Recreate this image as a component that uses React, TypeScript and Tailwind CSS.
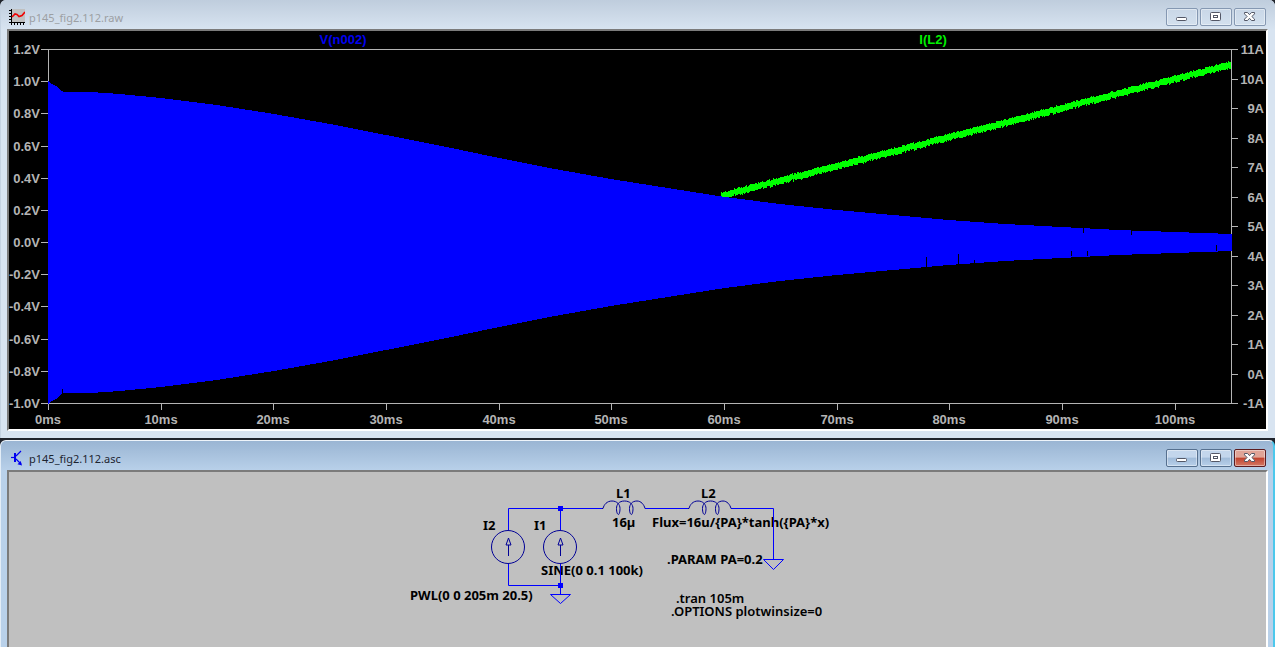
import React from "react";

type Variant = "inactive" | "active";

// upper envelope of V(n002) as x / y points, the lower one is its mirror
const ENVELOPE = [
    [48, 81], [52, 84], [56, 86], [60, 90], [64, 92], [90, 92], [120, 94],
    [161, 98], [217, 105], [274, 114], [330, 124], [386, 135], [442, 146],
    [499, 158], [555, 169], [611, 179], [668, 188], [725, 197], [780, 204],
    [837, 210], [893, 215], [949, 220], [1005, 224], [1062, 227],
    [1118, 230], [1175, 232], [1232, 234],
];
const ZERO = 242;

// sampling gaps along the edges of the trace
const GAPS = [
    [62, 389, 8], [926, 257, 10], [958, 254, 10], [974, 260, 4],
    [1071, 251, 5], [1087, 251, 5], [1216, 245, 6], [1083, 226, 7],
    [1131, 229, 6],
];

const VOLTS = ["1.2V", "1.0V", "0.8V", "0.6V", "0.4V", "0.2V", "0.0V", "-0.2V", "-0.4V", "-0.6V", "-0.8V", "-1.0V"];
const AMPS = ["11A", "10A", "9A", "8A", "7A", "6A", "5A", "4A", "3A", "2A", "1A", "0A", "-1A"];
const TIMES = ["0ms", "10ms", "20ms", "30ms", "40ms", "50ms", "60ms", "70ms", "80ms", "90ms", "100ms"];

const envelopePath = () => {
    const top = ENVELOPE.map(([x, y]) => `${x},${y}`);
    const bottom = [...ENVELOPE].reverse().map(([x, y]) => `${x},${2 * ZERO - y + 1}`);
    return [...top, ...bottom].join(" ");
};

const currentPath = () => {
    let d = "";
    let seed = 7;
    for (let x = 721; x < 1231; x++) {
        seed = (seed * 1103 + 12345) % 65536;
        const mid = 196 - (x - 721) * 0.2575;
        const y = Math.round(mid - 3.5 + (seed / 65536 - 0.5) * 1.6);
        const height = seed % 3 === 0 ? 6 : 7;
        d += `M${x} ${y}h1v${height}h-1z`;
    }
    return d;
};

const WaveIcon = () => (
    <svg className="h-4 w-4" viewBox="0 0 16 16" shapeRendering="crispEdges">
        <rect x="2" y="0" width="14" height="13" fill="#c0c0c0" />
        <path d="M2.5 0V16M0 13.5H16" stroke="#000" fill="none" />
        <path d="M0 1.5h2M0 4.5h2M0 7.5h2M0 10.5h2M5.5 14v2M8.5 14v2M11.5 14v2M14.5 14v2" stroke="#000" />
        <path d="M3 8L6 5L8 5.5L10 7.5L13 6.5L16 3" stroke="#f00000" strokeWidth="1.6" fill="none" shapeRendering="auto" />
    </svg>
);

const TransistorIcon = () => (
    <svg className="h-4 w-4" viewBox="0 0 16 16" fill="none" stroke="#0000f0">
        <path d="M2 7.5H6" strokeWidth="1.2" />
        <path d="M6 3V12" strokeWidth="2" />
        <path d="M7 6L12 1M7 9L12 14" strokeWidth="1.2" />
        <path d="M13 15.5L8.5 14.2L11.7 11Z" fill="#0000f0" stroke="none" />
    </svg>
);

const GLYPHS = {
    Minimize: <rect x="3.5" y="7.5" width="10" height="3" rx="1" />,
    Restore: (
        <>
            <rect x="3.5" y="2.5" width="10" height="8" rx="1" />
            <rect x="6.5" y="5.5" width="4" height="2" />
        </>
    ),
    Close: <path d="M3.5 2.5h3l2 2.2l2-2.2h3v1.4L10.9 6.5l2.6 2.6v1.4h-3l-2-2.2l-2 2.2h-3V9.1L6.1 6.5L3.5 3.9z" />,
};

const CaptionButton = ({ label, variant }: { label: keyof typeof GLYPHS; variant: Variant }) => {
    let look = "border-[#8598b2] bg-linear-to-b from-[#c9d7e7] to-[#d3e0ee]";
    if (variant === "active") {
        look =
            label === "Close"
                ? "border-[#5c1c20] bg-linear-to-b from-[#e0a497] from-45% via-[#c0402c] via-50% to-[#d47864]"
                : "border-[#56708f] bg-linear-to-b from-[#c3d6ec] from-45% via-[#a0bbd9] via-50% to-[#b8d0ea]";
    }

    return (
        <button
            type="button"
            aria-label={label}
            className={`flex h-[18px] w-8 items-center justify-center rounded-xs border inset-ring inset-ring-white/40 ${look}`}
        >
            <svg className="h-[14px] w-[18px]" viewBox="0 0 18 14" fill="#fff" stroke="#535766" fillRule="evenodd">
                {GLYPHS[label]}
            </svg>
        </button>
    );
};

const TitleBar = ({ title, variant, icon }: { title: string; variant: Variant; icon: React.ReactNode }) => (
    <header className="flex items-center justify-between pt-1 pr-[9px] pl-2">
        <div className="flex items-center gap-1">
            {icon}
            <h1
                className={`pt-0.5 font-['Noto_Sans',sans-serif] text-[11px] leading-4 ${
                    variant === "active" ? "text-[#1c2430]" : "text-[#9c9fa3]"
                }`}
            >
                {title}
            </h1>
        </div>
        <div className="flex gap-0.5">
            <CaptionButton label="Minimize" variant={variant} />
            <CaptionButton label="Restore" variant={variant} />
            <CaptionButton label="Close" variant={variant} />
        </div>
    </header>
);

const Plot = () => (
    <svg
        className="block w-full bg-black font-['Liberation_Sans',Arial,sans-serif] text-[13px] font-bold"
        viewBox="9 31 1257 398"
    >
        <text x="343" y="44" textAnchor="middle" fill="#0000f0">V(n002)</text>
        <text x="933" y="44" textAnchor="middle" fill="#00f000">I(L2)</text>

        <g stroke="#b4b4b4" fill="none" shapeRendering="crispEdges">
            <path d="M41 49.5H1238M41 403.5H1238M48.5 49V403M1231.5 49V403" />
            {VOLTS.map((label, i) => (
                <path key={label} d={`M41 ${Math.round(49 + i * 32.18) + 0.5}h7`} />
            ))}
            {AMPS.map((label, i) => (
                <path key={label} d={`M1231 ${Math.round(49 + i * 29.5) + 0.5}h7`} />
            ))}
            {TIMES.map((label, i) => (
                <path key={label} d={`M${Math.round(48 + i * 112.67) + 0.5} 403v7`} />
            ))}
        </g>

        <g fill="#b4b4b4">
            {VOLTS.map((label, i) => (
                <text key={label} x="40" y={Math.round(54 + i * 32.18)} textAnchor="end">{label}</text>
            ))}
            {AMPS.map((label, i) => (
                <text key={label} x="1264" y={Math.round(54 + i * 29.5)} textAnchor="end">{label}</text>
            ))}
            {TIMES.map((label, i) => (
                <text key={label} x={Math.round(48 + i * 112.67)} y="424" textAnchor="middle">{label}</text>
            ))}
        </g>

        <g shapeRendering="crispEdges">
            <path d={currentPath()} fill="#00ff00" />
            <polygon points={envelopePath()} fill="#0000ff" />
            {GAPS.map(([x, y, h]) => (
                <rect key={x} x={x} y={y} width="1" height={h} fill="#000" />
            ))}
        </g>
    </svg>
);

const CurrentSource = ({ x }: { x: number }) => (
    <g transform={`translate(${x} 547)`}>
        <circle cx="0" cy="0" r="16.5" />
        <path d="M0.5 -9L-2 -2H3ZM0.5 -2V9" />
    </g>
);

const Inductor = ({ x }: { x: number }) => (
    <path
        transform={`translate(${x} 508.5)`}
        d="M0 0H1C2 -4 5 -7.5 10 -7.5C15 -7.5 18 -4 18 0C18 4 17 6 16.5 6C15.5 6 14.5 4 14.5 0C14.5 -4 17 -7.5 22.5 -7.5C28 -7.5 31 -4 31 0C31 4 30 6 29.5 6C28.5 6 27.5 4 27.5 0C27.5 -4 30 -7.5 35 -7.5C39 -7.5 42 -4 43 0"
    />
);

const Schematic = () => (
    <svg
        className="block w-full font-['Noto_Sans',sans-serif] text-[13px]"
        viewBox="9 472 1257 175"
    >
        <g className="font-bold" fill="#000">
            <text x="483" y="530">I2</text>
            <text x="534" y="530">I1</text>
            <text x="616" y="498">L1</text>
            <text x="701" y="498">L2</text>
            <text x="612" y="527">16µ</text>
            <text x="652" y="527">{"Flux=16u/{PA}*tanh({PA}*x)"}</text>
            <text x="541" y="575">SINE(0 0.1 100k)</text>
            <text x="410" y="600">PWL(0 0 205m 20.5)</text>
            <text x="667" y="564">.PARAM PA=0.2</text>
        </g>
        <g className="font-semibold" fill="#000">
            <text x="676" y="603">.tran 105m</text>
            <text x="671" y="616">.OPTIONS plotwinsize=0</text>
        </g>
        <g fill="none" stroke="#0000ff">
            <path d="M508.5 530V508.5H602M560.5 508V530M508.5 564V585.5H560.5M560.5 564V594M645 508.5H688M731 508.5H773.5V559" />
            <path d="M550.5 594.5H570.5L560.5 603.5ZM763.5 559.5H783.5L773.5 569.5Z" />
        </g>
        <path d="M558 506h5v5h-5zM558 583h5v5h-5z" fill="#0000ff" />
        <g fill="none" stroke="#000096">
            <CurrentSource x={508} />
            <CurrentSource x={560} />
            <Inductor x={602} />
            <Inductor x={688} />
        </g>
    </svg>
);

export default function App() {
    return (
        <main className="flex min-h-screen flex-col bg-[#20242c]">
            <section className="rounded-t-md border-l border-[#c5d3e2] bg-[#d8e4f1] bg-linear-to-b from-[#bfcddd] to-[#d8e4f1] to-[30px] pb-[7px]">
                <div className="flex h-[29px] flex-col justify-center">
                    <TitleBar title="p145_fig2.112.raw" variant="inactive" icon={<WaveIcon />} />
                </div>
                <div className="mr-[7px] ml-[6px] border-2 border-t-[#7b7b7b] border-r-white border-b-white border-l-[#7b7b7b]">
                    <Plot />
                </div>
            </section>
            <section className="mt-0.5 flex flex-1 flex-col rounded-t-md border-t border-r-2 border-l border-t-[#eef4fa] border-r-[#4cc8ec] border-l-[#e3edf7] bg-[#b9d1ea] bg-linear-to-b from-[#9ab5d3] to-[#b9d1ea] to-[30px]">
                <div className="flex h-[29px] flex-col justify-center">
                    <div className="-mr-0.5">
                        <TitleBar title="p145_fig2.112.asc" variant="active" icon={<TransistorIcon />} />
                    </div>
                </div>
                <div className="mr-[5px] ml-[6px] flex-1 border-2 border-b-0 border-t-[#7b7b7b] border-r-white border-l-[#7b7b7b] bg-[#c0c0c0]">
                    <Schematic />
                </div>
            </section>
        </main>
    );
}
